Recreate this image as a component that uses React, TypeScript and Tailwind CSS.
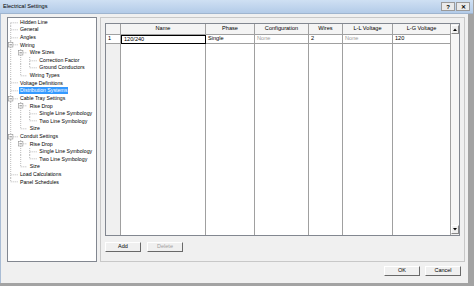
import React from "react";

type Conn = "first" | "tee" | "elbow";
type Row = { label: string; guides: number; conn: Conn; exp?: boolean; sel?: boolean };

const rows: Row[] = [
  { label: "Hidden Line", guides: 0, conn: "first" },
  { label: "General", guides: 0, conn: "tee" },
  { label: "Angles", guides: 0, conn: "tee" },
  { label: "Wiring", guides: 0, conn: "tee", exp: true },
  { label: "Wire Sizes", guides: 1, conn: "tee", exp: true },
  { label: "Correction Factor", guides: 2, conn: "tee" },
  { label: "Ground Conductors", guides: 2, conn: "elbow" },
  { label: "Wiring Types", guides: 1, conn: "elbow" },
  { label: "Voltage Definitions", guides: 0, conn: "tee" },
  { label: "Distribution Systems", guides: 0, conn: "tee", sel: true },
  { label: "Cable Tray Settings", guides: 0, conn: "tee", exp: true },
  { label: "Rise Drop", guides: 1, conn: "tee", exp: true },
  { label: "Single Line Symbology", guides: 2, conn: "tee" },
  { label: "Two Line Symbology", guides: 2, conn: "elbow" },
  { label: "Size", guides: 1, conn: "elbow" },
  { label: "Conduit Settings", guides: 0, conn: "tee", exp: true },
  { label: "Rise Drop", guides: 1, conn: "tee", exp: true },
  { label: "Single Line Symbology", guides: 2, conn: "tee" },
  { label: "Two Line Symbology", guides: 2, conn: "elbow" },
  { label: "Size", guides: 1, conn: "elbow" },
  { label: "Load Calculations", guides: 0, conn: "tee" },
  { label: "Panel Schedules", guides: 0, conn: "elbow" },
];

const CW = 9.7;
const RH = 7.62;
const LX = 2.7;
const MID = RH / 2;
const LINE = "#a8a8a8";

function Pipe() {
  return (
    <svg width={CW} height={RH} viewBox={`0 0 ${CW} ${RH}`} className="shrink-0 block">
      <line x1={LX} y1={0} x2={LX} y2={RH} stroke={LINE} strokeWidth={0.8} strokeDasharray="1 1" />
    </svg>
  );
}

function Connector({ conn, exp }: { conn: Conn; exp?: boolean }) {
  const y1 = conn === "first" ? MID : 0;
  const y2 = conn === "elbow" ? MID : RH;
  return (
    <svg width={CW} height={RH} viewBox={`0 0 ${CW} ${RH}`} className="shrink-0 block">
      <line x1={LX} y1={y1} x2={LX} y2={y2} stroke={LINE} strokeWidth={0.8} strokeDasharray="1 1" />
      <line x1={LX} y1={MID} x2={CW} y2={MID} stroke={LINE} strokeWidth={0.8} strokeDasharray="1 1" />
      {exp && (
        <g>
          <rect x={LX - 2.2} y={MID - 2.2} width={4.4} height={4.4} fill="#ffffff" stroke="#919191" strokeWidth={0.6} />
          <line x1={LX - 1.2} y1={MID} x2={LX + 1.2} y2={MID} stroke="#333" strokeWidth={0.6} />
        </g>
      )}
    </svg>
  );
}

function Tree() {
  return (
    <div className="w-[90px] h-full bg-white border border-[#828790] flex flex-col pt-[0.5px]">
      {rows.map((r, i) => (
        <div key={i} className="flex items-center h-[7.62px]">
          {Array.from({ length: r.guides }).map((_, g) => (
            <Pipe key={g} />
          ))}
          <Connector conn={r.conn} exp={r.exp} />
          <span
            className={
              "ml-[1.3px] px-[1px] text-[5.2px] leading-[7px] whitespace-nowrap " +
              (r.sel ? "bg-[#3399ff] text-white" : "text-black")
            }
          >
            {r.label}
          </span>
        </div>
      ))}
    </div>
  );
}

const headers = ["", "Name", "Phase", "Configuration", "Wires", "L-L Voltage", "L-G Voltage"];
const row1 = [
  { t: "1", c: "text-black" },
  { t: "120/240", c: "text-black" },
  { t: "Single", c: "text-black" },
  { t: "None", c: "text-[#9a9a9a]" },
  { t: "2", c: "text-black" },
  { t: "None", c: "text-[#9a9a9a]" },
  { t: "120", c: "text-black" },
];

function Triangle({ up }: { up?: boolean }) {
  return (
    <svg width="4" height="3" viewBox="0 0 4 3" className="block">
      {up ? <polygon points="0,3 4,3 2,0.5" fill="#000" /> : <polygon points="0,0 4,0 2,2.5" fill="#000" />}
    </svg>
  );
}

function Grid() {
  return (
    <div className="w-[355px] h-[213px] border border-[#828790] bg-white flex">
      <div className="grid grid-cols-[15px_85px_49px_54px_34px_50px_58px] grid-rows-[11px_9px_1fr] flex-1">
        {headers.map((h, i) => (
          <div
            key={"h" + i}
            className="bg-[#f4f4f4] border-r border-b border-[#a0a0a0] flex items-center justify-center text-[5.6px] leading-none text-black whitespace-nowrap"
          >
            {h}
          </div>
        ))}
        {row1.map((c, i) => (
          <div
            key={"r" + i}
            className={
              "flex items-center pl-[2px] text-[5.6px] leading-none whitespace-nowrap " +
              c.c +
              (i === 1 ? " border border-black" : " border-r border-b border-[#a0a0a0]") +
              (i === 0 ? " bg-white" : "")
            }
          >
            {c.t}
          </div>
        ))}
        {headers.map((_, i) => (
          <div key={"f" + i} className={"border-r border-[#a0a0a0] " + (i === 0 ? "bg-[#f0f0f0]" : "bg-white")} />
        ))}
      </div>
      <div className="w-[8px] flex flex-col bg-[#f0f0f0]">
        <div className="h-[9px] mt-[1px] bg-[#f0f0f0] border border-t-white border-l-white border-r-[#888] border-b-[#888] flex items-center justify-center">
          <Triangle up />
        </div>
        <div className="flex-1 bg-[#f6f6f6]" />
        <div className="h-[9px] mb-[1px] bg-[#f0f0f0] border border-t-white border-l-white border-r-[#888] border-b-[#888] flex items-center justify-center">
          <Triangle />
        </div>
      </div>
    </div>
  );
}

function Btn({ children, disabled }: { children: React.ReactNode; disabled?: boolean }) {
  return (
    <div
      className={
        "w-[36px] h-[10px] bg-[#f0f0f0] border border-t-white border-l-white border-r-[#696969] border-b-[#696969] flex items-center justify-center text-[5.5px] leading-none " +
        (disabled ? "text-[#a0a0a0]" : "text-black")
      }
    >
      {children}
    </div>
  );
}

export default function App() {
  return (
    <div className="w-[474px] h-[286px] bg-[#a3a3a3] flex flex-col overflow-hidden font-['Liberation_Sans',Arial,sans-serif]">
      <div className="h-[14px] mr-[1px] bg-gradient-to-b from-[#cfe0f3] to-[#b3cbe8] border-b border-[#9fb5cf] flex items-center pl-[3px] pr-[3px]">
        <span className="text-[5.6px] leading-none text-black flex-1">Electrical Settings</span>
        <div className="flex gap-[1px]">
          <div className="w-[14px] h-[9px] bg-[#eaeaea] border border-[#9a9a9a] flex items-center justify-center text-[6px] font-bold leading-none text-black">?</div>
          <div className="w-[14px] h-[9px] bg-[#eaeaea] border border-[#9a9a9a] flex items-center justify-center text-[6px] font-bold leading-none text-black">✕</div>
        </div>
      </div>
      <div className="flex flex-1">
        <div className="w-[1px] bg-[#a9bcd4]" />
        <div className="w-[467px] bg-[#f0f0f0] flex flex-col pl-[6px] pt-[3px]">
          <div className="flex h-[245px] gap-[3px]">
            <Tree />
            <div className="w-[365px] h-full border border-[#c8c8c8] flex flex-col pl-[4px] pt-[5px]">
              <Grid />
              <div className="flex gap-[6px] mt-[6px]">
                <Btn>Add</Btn>
                <Btn disabled>Delete</Btn>
              </div>
            </div>
          </div>
          <div className="flex justify-end gap-[5px] pr-[7px] mt-[4px]">
            <Btn>OK</Btn>
            <Btn>Cancel</Btn>
          </div>
        </div>
      </div>
      <div className="h-[3px]" />
    </div>
  );
}
